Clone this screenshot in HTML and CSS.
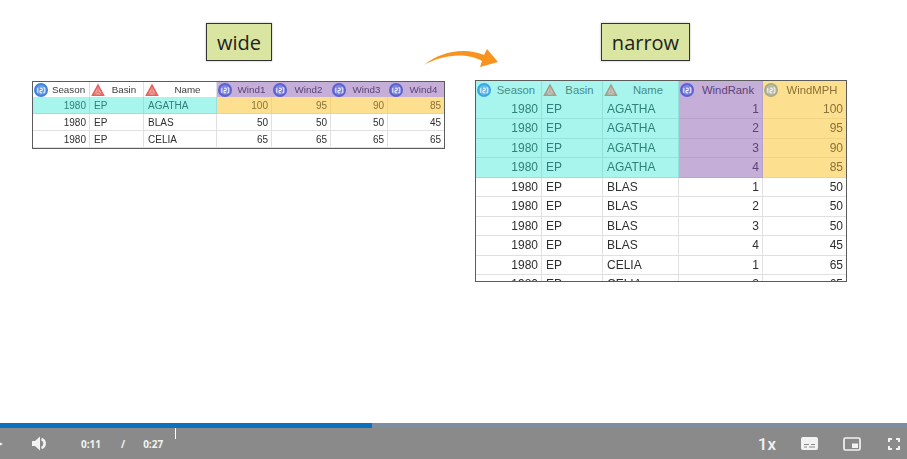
FILE: index.html
```html
<!DOCTYPE html>
<html lang="en">
<head>
    <meta charset="UTF-8">
    <title>Wide to narrow</title>
    <link rel="stylesheet" href="styles.css">
</head>
<body>
    <svg class="defs" width="0" height="0">
        <symbol id="num" viewBox="0 0 14 14">
            <circle cx="7" cy="7" r="7" fill="currentColor"/>
            <circle cx="7" cy="7" r="5" fill="#fff" fill-opacity=".22"/>
            <path d="M3.800 9.800V4.800M6 5.200h2.200v2.300H6v2.300h2.200M9.300 4.800h1.500v5H9.300" fill="none" stroke="#fff" stroke-width=".9"/>
        </symbol>
        <symbol id="str" viewBox="0 0 14 14">
            <path d="M7 .5 13.800 13H.2Z" fill="currentColor"/>
            <path d="M7 3.500 11 11.500H3Z" fill="#fff" fill-opacity=".45"/>
            <path d="M7 3.500V9L3 11.500M7 9l4 2.500" fill="none" stroke="currentColor" stroke-width=".8"/>
        </symbol>
    </svg>

    <div class="video">
        <main class="stage">
            <section class="side side-wide">
                <div class="badge badge-wide">wide</div>
                <div class="table wide">
                    <div class="row head">
                        <div class="th"><svg class="ico c-blue"><use href="#num"/></svg><span>Season</span></div>
                        <div class="th"><svg class="ico c-red"><use href="#str"/></svg><span>Basin</span></div>
                        <div class="th"><svg class="ico c-red"><use href="#str"/></svg><span>Name</span></div>
                        <div class="th purple"><svg class="ico c-indigo"><use href="#num"/></svg><span>Wind1</span></div>
                        <div class="th purple"><svg class="ico c-indigo"><use href="#num"/></svg><span>Wind2</span></div>
                        <div class="th purple"><svg class="ico c-indigo"><use href="#num"/></svg><span>Wind3</span></div>
                        <div class="th purple"><svg class="ico c-indigo"><use href="#num"/></svg><span>Wind4</span></div>
                    </div>
                    <div class="row">
                        <div class="td r cyan">1980</div><div class="td cyan">EP</div><div class="td cyan">AGATHA</div>
                        <div class="td r orange">100</div><div class="td r orange">95</div><div class="td r orange">90</div><div class="td r orange">85</div>
                    </div>
                    <div class="row">
                        <div class="td r">1980</div><div class="td">EP</div><div class="td">BLAS</div>
                        <div class="td r">50</div><div class="td r">50</div><div class="td r">50</div><div class="td r">45</div>
                    </div>
                    <div class="row">
                        <div class="td r">1980</div><div class="td">EP</div><div class="td">CELIA</div>
                        <div class="td r">65</div><div class="td r">65</div><div class="td r">65</div><div class="td r">65</div>
                    </div>
                </div>
            </section>

            <section class="side side-narrow">
                <div class="badge badge-narrow">narrow</div>
                <div class="table narrow">
                    <div class="row head">
                        <div class="th cyan"><svg class="ico c-sky"><use href="#num"/></svg><span>Season</span></div>
                        <div class="th cyan"><svg class="ico c-grey"><use href="#str"/></svg><span>Basin</span></div>
                        <div class="th cyan"><svg class="ico c-grey"><use href="#str"/></svg><span>Name</span></div>
                        <div class="th purple"><svg class="ico c-indigo"><use href="#num"/></svg><span>WindRank</span></div>
                        <div class="th orange"><svg class="ico c-olive"><use href="#num"/></svg><span>WindMPH</span></div>
                    </div>
                    <div class="row"><div class="td r cyan">1980</div><div class="td cyan">EP</div><div class="td cyan">AGATHA</div><div class="td r purple">1</div><div class="td r orange">100</div></div>
                    <div class="row"><div class="td r cyan">1980</div><div class="td cyan">EP</div><div class="td cyan">AGATHA</div><div class="td r purple">2</div><div class="td r orange">95</div></div>
                    <div class="row"><div class="td r cyan">1980</div><div class="td cyan">EP</div><div class="td cyan">AGATHA</div><div class="td r purple">3</div><div class="td r orange">90</div></div>
                    <div class="row"><div class="td r cyan">1980</div><div class="td cyan">EP</div><div class="td cyan">AGATHA</div><div class="td r purple">4</div><div class="td r orange">85</div></div>
                    <div class="row"><div class="td r">1980</div><div class="td">EP</div><div class="td">BLAS</div><div class="td r">1</div><div class="td r">50</div></div>
                    <div class="row"><div class="td r">1980</div><div class="td">EP</div><div class="td">BLAS</div><div class="td r">2</div><div class="td r">50</div></div>
                    <div class="row"><div class="td r">1980</div><div class="td">EP</div><div class="td">BLAS</div><div class="td r">3</div><div class="td r">50</div></div>
                    <div class="row"><div class="td r">1980</div><div class="td">EP</div><div class="td">BLAS</div><div class="td r">4</div><div class="td r">45</div></div>
                    <div class="row"><div class="td r">1980</div><div class="td">EP</div><div class="td">CELIA</div><div class="td r">1</div><div class="td r">65</div></div>
                    <div class="row"><div class="td r">1980</div><div class="td">EP</div><div class="td">CELIA</div><div class="td r">2</div><div class="td r">65</div></div>
                </div>
            </section>

            <svg class="arrow" width="80" height="30" viewBox="0 0 80 30">
                <path d="M1 18C12 9 26 4 40 4C48 4 56 6 61 8L64 2 75 15 57 20 59 14C52 10 44 8.500 36 8.500C24 8.500 12 12 1 18Z" fill="#f7931e"/>
            </svg>
        </main>

        <div class="progress">
            <div class="progress-fill" style="width: 41%"></div>
        </div>
        <div class="controls">
            <svg class="play" width="12" height="12" viewBox="0 0 12 12"><path d="M0 0 12 6 0 12Z" fill="#f2f2f2"/></svg>
            <svg class="volume" width="15" height="15" viewBox="0 0 15 15">
                <path d="M0 5h3l5-4.500v14L3 10H0Z" fill="#f2f2f2"/>
                <path d="M9.500 3a4.800 4.800 0 0 1 0 9" fill="none" stroke="#f2f2f2" stroke-width="2.600"/>
            </svg>
            <span class="time time-now">0:11</span>
            <span class="time time-sep">/</span>
            <span class="time time-end">0:27</span>
            <span class="tick"></span>

            <div class="controls-right">
                <span class="speed">1x</span>
                <svg class="cc" width="17" height="13" viewBox="0 0 17 13">
                    <rect width="17" height="13" rx="2" fill="#f2f2f2"/>
                    <path d="M3 7.500h5M10 7.500h4M3 10h3M8 10h6" stroke="#8a8a8a"/>
                </svg>
                <svg class="pip" width="18" height="14" viewBox="0 0 18 14">
                    <rect x="1" y="1" width="16" height="12" rx="1.500" fill="none" stroke="#f2f2f2" stroke-width="1.700"/>
                    <rect x="9" y="6.500" width="6" height="4.500" fill="#f2f2f2"/>
                </svg>
                <svg class="full" width="12" height="12" viewBox="0 0 12 12">
                    <path d="M1 4V1h3M8 1h3v3M11 8v3H8M4 11H1V8" fill="none" stroke="#f2f2f2" stroke-width="2"/>
                </svg>
            </div>
        </div>
    </div>
</body>
</html>
```

FILE: styles.css
```css
body { margin: 0; background: #fff; font-family: "Liberation Sans", Arial, sans-serif; overflow: hidden; }
.defs { position: absolute; }
.video { width: 907px; height: 459px; display: flex; flex-direction: column; }

.stage { position: relative; height: 423px; display: flex; padding: 23px 0 0 32px; box-sizing: border-box; overflow: hidden; }
.side { display: flex; flex-direction: column; }
.side-wide { width: 413px; }
.side-narrow { width: 372px; margin-left: 30px; }

.badge { height: 38px; box-sizing: border-box; background: #d9e5a0; border: 1.500px solid #333; box-shadow: 0 0 2px rgba(0,0,0,0.3); font-family: "Open Sans", sans-serif; font-size: 20px; color: #222; display: flex; align-items: center; justify-content: center; }
.badge-wide { width: 66px; margin-left: 174px; }
.badge-narrow { width: 89px; margin-left: 126px; }

.table { box-sizing: border-box; border: 1px solid #5c5c5c; overflow: hidden; filter: blur(0.5px); color: #2e2e2e; }
.wide { margin-top: 20px; height: 68px; font-size: 10px; }
.narrow { margin-top: 19px; height: 202px; font-size: 12px; }
.wide .th { font-size: 9.800px; }
.narrow .th { font-size: 11.300px; }

.row { display: grid; }
.wide .row { grid-template-columns: 57px 54px 73px 55px 59px 57px 1fr; height: 17px; }
.wide .head { height: 15px; }
.narrow .row { grid-template-columns: 66px 61px 76px 84px 1fr; height: 19.500px; }
.narrow .head { height: 18.500px; }

.th, .td { box-sizing: border-box; display: flex; align-items: center; border-right: 1px solid #e0e0e0; border-bottom: 1px solid #e0e0e0; padding: 0 3px 0 4px; white-space: nowrap; }
.th { padding: 0 0 0 1px; border-bottom: 0; color: #3c3c3c; }
.th span { flex: 1; text-align: center; }
.td.r { justify-content: flex-end; }
.row > :last-child { border-right: 0; }

.cyan { background: #a8f5ee; border-color: #95e2dc; color: #2f8078; }
.purple { background: #c5aed8; border-color: #b9a2cc; color: #5d4378; }
.orange { background: #fde08f; border-color: #f0d384; color: #8a7238; }
.wide .th.purple { border-color: #c5aed8; }
.th.cyan { color: #4c8c86; }

.ico { flex: none; width: 14px; height: 14px; }
.c-blue { color: #3f82dc; }
.c-sky { color: #3aa8e2; }
.c-indigo { color: #5b62d2; }
.c-olive { color: #a9ab8c; }
.c-red { color: #e2625c; }
.c-grey { color: #a39d8e; }

.arrow { position: absolute; left: 423px; top: 47px; }

.progress { height: 5px; background: #7f8da1; }
.progress-fill { height: 100%; background: #0a72bd; }

.controls { position: relative; flex: 1; background: #8a8a8a; display: flex; align-items: center; color: #f2f2f2; }
.play { margin-left: -9px; flex: none; }
.volume { margin-left: 29px; flex: none; }
.time { font-family: "Open Sans", sans-serif; font-size: 10px; font-weight: 700; }
.time-now { margin-left: 34px; }
.time-sep { margin-left: 20px; }
.time-end { margin-left: 18px; }
.tick { position: absolute; left: 175px; top: 0; width: 1px; height: 11px; background: #fff; }

.controls-right { margin-left: auto; display: flex; align-items: center; padding-right: 7px; }
.speed { font-family: Roboto, sans-serif; font-size: 17px; font-weight: 500; }
.cc { margin-left: 25px; }
.pip { margin-left: 25px; }
.full { margin-left: 27px; }
```
